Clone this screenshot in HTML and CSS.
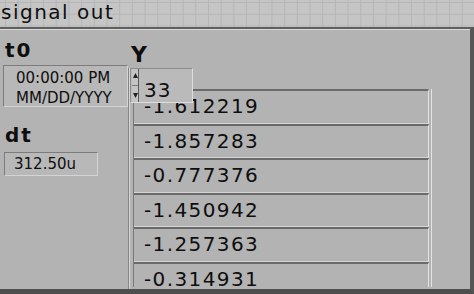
FILE: index.html
```html
<!DOCTYPE html>
<html lang="en">
  <head>
    <meta charset="UTF-8" />
    <title>signal out</title>
    <link rel="stylesheet" href="styles.css">
  </head>
  <body>
    <div class="titlebar">
      <span class="title">signal out</span>
    </div>
    <div class="cluster">
      <div class="col-left">
        <div class="label label-t0">t0</div>
        <div class="stamp">00:00:00 PM<br>MM/DD/YYYY</div>
        <div class="label label-dt">dt</div>
        <div class="numbox">312.50u</div>
      </div>
      <div class="col-array">
        <div class="label label-y">Y</div>
        <div class="array">
          <div class="index">
            <svg class="spinner" width="7" height="33" viewBox="0 0 7 33">
              <rect x="0" y="0" width="7" height="33" fill="#c4c4c4" />
              <line x1="6.5" y1="0" x2="6.5" y2="33" stroke="#5a5a5a" />
              <line x1="0" y1="16.5" x2="6" y2="16.5" stroke="#7a7a7a" />
              <polygon points="3.5,4 1,9 6,9" fill="#202020" />
              <polygon points="1,24 6,24 3.5,29" fill="#202020" />
            </svg>
            <span class="index-value">33</span>
          </div>
          <div class="elements">
            <div class="row">-1.612219</div>
            <div class="row">-1.857283</div>
            <div class="row">-0.777376</div>
            <div class="row">-1.450942</div>
            <div class="row">-1.257363</div>
            <div class="row">-0.314931</div>
          </div>
        </div>
      </div>
    </div>
  </body>
</html>
```

FILE: styles.css
```css
/* styles.css */
body {
  margin: 0;
  width: 474px;
  height: 294px;
  overflow: hidden;
  font-family: "DejaVu Sans", sans-serif;
  color: #0e0e0e;
  background: #b3b3b3;
}

.titlebar {
  height: 27px;
  box-sizing: border-box;
  padding-top: 2px;
  background-color: #c5c5c5;
  background-image:
    linear-gradient(to right, #b5b5b5 1px, transparent 1px),
    linear-gradient(to bottom, #b5b5b5 1px, transparent 1px);
  background-size: 12.7px 11.7px;
  background-position: 5px 2px;
}

.title {
  display: block;
  font-size: 20px;
  line-height: 20px;
  letter-spacing: 1.5px;
  padding-left: 1px;
}

.cluster {
  display: flex;
  height: 267px;
  box-sizing: border-box;
  background: #b3b3b3;
  border-top: 2px solid #5e5e5e;
  border-right: 4px solid #565656;
  border-bottom: 5px solid #4e4e4e;
  box-shadow: inset 0 1px #dadada;
}

.col-left {
  width: 128px;
  padding-left: 3px;
  box-sizing: border-box;
}

.label {
  font-weight: bold;
  font-size: 20px;
  line-height: 20px;
  letter-spacing: 2px;
}

.label-t0 {
  margin-top: 11px;
  padding-left: 2px;
}

.stamp {
  margin-top: 5px;
  width: 125px;
  box-sizing: border-box;
  padding: 2px 0 0 12px;
  height: 42px;
  font-size: 15px;
  line-height: 20px;
  background: #b8b8b8;
  border: 1px solid;
  border-color: #7c7c7c #d4d4d4 #d4d4d4 #7c7c7c;
}

.label-dt {
  margin-top: 18px;
  padding-left: 2px;
}

.numbox {
  margin: 7px 0 0 1px;
  width: 94px;
  height: 24px;
  box-sizing: border-box;
  padding: 1px 0 0 9px;
  font-size: 15px;
  line-height: 21px;
  background: #b8b8b8;
  border: 1px solid;
  border-color: #7c7c7c #d4d4d4 #d4d4d4 #7c7c7c;
}

.col-array {
  flex: 1;
  display: flex;
  flex-direction: column;
}

.label-y {
  margin: 15px 0 0 3px;
  font-size: 22px;
  line-height: 22px;
  letter-spacing: 0;
}

.array {
  position: relative;
  margin-top: 2px;
  flex: 1;
  width: 305px;
  box-sizing: border-box;
  padding: 21px 0 2px 4px;
  border-left: 1px solid #858585;
  box-shadow: inset 1px 0 #d8d8d8;
  overflow: hidden;
}

.index {
  position: absolute;
  left: 1px;
  top: 0;
  z-index: 1;
  width: 63px;
  height: 35px;
  box-sizing: border-box;
  display: flex;
  background: #bababa;
  border: 1px solid;
  border-color: #8c8c8c #dedede #dedede #8c8c8c;
}

.spinner {
  margin-left: 1px;
}

.index-value {
  padding: 11px 0 0 5px;
  font-size: 20px;
  line-height: 20px;
  letter-spacing: 1px;
}

.elements {
  height: 100%;
  border-left: 1px solid #7a7a7a;
  border-right: 1px solid #e2e2e2;
  padding-right: 2px;
  width: 299px;
  box-sizing: border-box;
  overflow: hidden;
}

.row {
  height: 34.6px;
  box-sizing: border-box;
  padding-left: 10px;
  font-size: 20px;
  line-height: 31.6px;
  letter-spacing: 1.4px;
  border-top: 2px solid #6a6a6a;
  border-bottom: 1px solid #d6d6d6;
  border-right: 1px solid #e2e2e2;
}
```
